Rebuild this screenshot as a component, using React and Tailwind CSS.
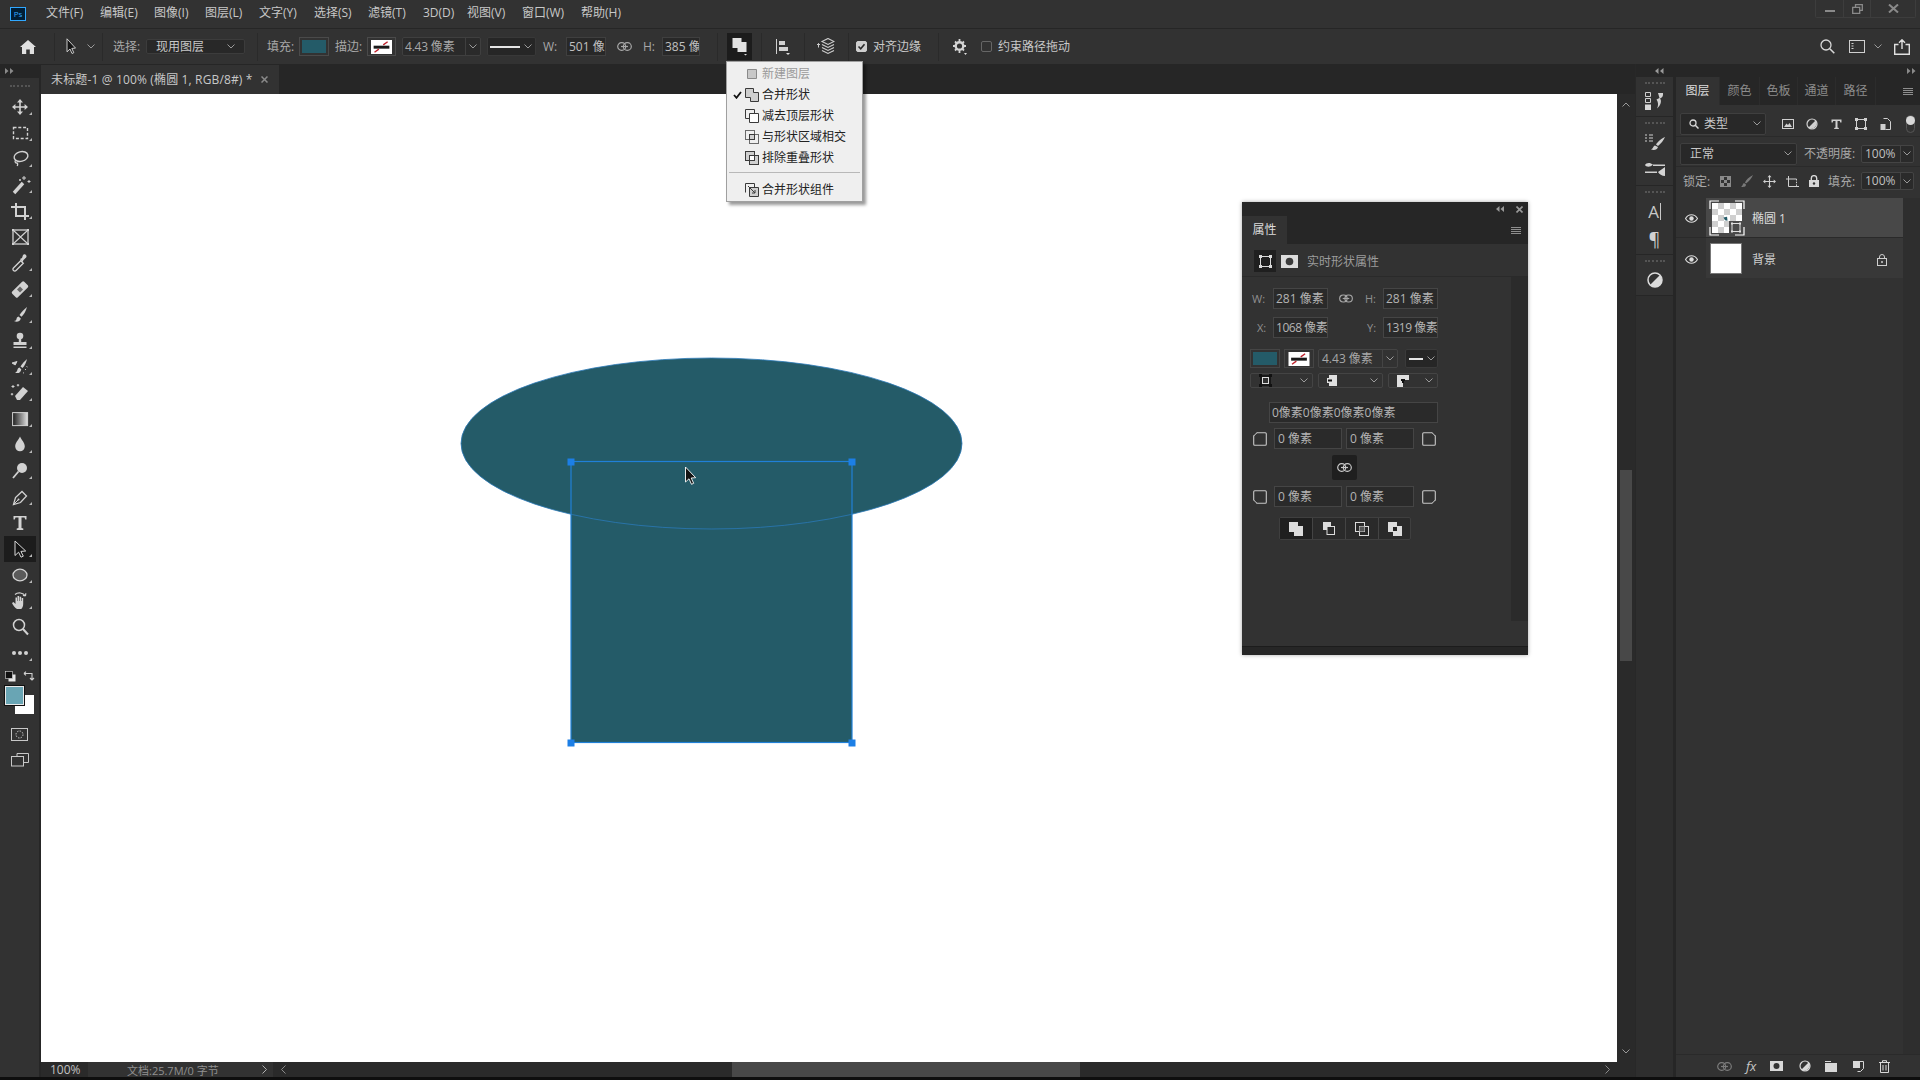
import React from 'react';

const C = '#d2d2d2';

// ---------- small shared bits ----------
const Chev = ({ className = '', dir = 'down' }) => (
  <svg width="8" height="5" viewBox="0 0 8 5" className={className} style={dir === 'down' ? undefined : { transform: 'rotate(180deg)' }}>
    <path d="M.5.5 4 4 7.5.5" fill="none" stroke="#9a9a9a" strokeWidth="1" />
  </svg>
);

const Sep = ({ className = '' }) => <div className={`w-px h-[28px] bg-[#2a2a2a] shrink-0 ${className}`} />;

const Grip = () => <div className="w-[20px] h-[3px] mx-auto border-t-2 border-dotted border-[#555555]" />;

const Tri = ({ x = 25, y = 18 }) => <path d={`M${x + 3} ${y}v3h-3z`} fill="#b8b8b8" />;

const LinkIcon = ({ color = '#a8a8a8' }) => (
  <svg width="15" height="9" viewBox="0 0 15 9">
    <rect x=".7" y=".7" width="8" height="7.6" rx="3.8" fill="none" stroke={color} strokeWidth="1.2" />
    <rect x="6.3" y=".7" width="8" height="7.6" rx="3.8" fill="none" stroke={color} strokeWidth="1.2" />
    <path d="M4 4.5h7" stroke={color} strokeWidth="1.2" />
  </svg>
);

const StrokeSwatch = ({ w, h }) => (
  <svg width={w} height={h} viewBox="0 0 24 16">
    <rect width="24" height="16" fill="#fff" />
    <rect x="3" y="6.5" width="18" height="3.4" fill="#1a1a1a" />
    <path d="M14 5.5 19 2M4 14l5-3.5" stroke="#c0222c" strokeWidth="1.6" />
  </svg>
);

const Checkbox = ({ checked }) => (
  <div className={`w-[11px] h-[11px] rounded-[2px] shrink-0 flex items-center justify-center border ${checked ? 'bg-[#cfcfcf] border-[#cfcfcf]' : 'border-[#666666]'}`}>
    {checked && (
      <svg width="9" height="9" viewBox="0 0 9 9"><path d="M1.5 4.5 3.7 6.7 7.5 2.2" fill="none" stroke="#2a2a2a" strokeWidth="1.6" /></svg>
    )}
  </div>
);

// ---------- tool icons, drawn on a 32x26 box ----------
const T = ({ children, tri = true, active }) => (
  <div className={`h-[26px] w-[32px] mx-auto shrink-0 ${active ? 'bg-[#1c1c1c]' : ''}`}>
    <svg width="32" height="26" viewBox="0 0 32 26">
      {children}
      {tri && <Tri />}
    </svg>
  </div>
);

const tools = [
  <T key="move">
    <path d="M16 6v14M9 13h14" stroke={C} strokeWidth="1.6" />
    <path d="M16 5l-3 3.4h6zM16 21l-3-3.4h6zM8 13l3.4-3v6zM24 13l-3.4-3v6z" fill={C} />
  </T>,
  <T key="marquee"><rect x="9.5" y="7.5" width="14" height="11" fill="none" stroke={C} strokeWidth="1.4" strokeDasharray="3 1.8" /></T>,
  <T key="lasso">
    <ellipse cx="17" cy="10.5" rx="7" ry="4.8" fill="none" stroke={C} strokeWidth="1.4" transform="rotate(-14 17 10.5)" />
    <path d="M12 14c-1.6 1-1 3 .6 3 1.2 0 1.4 1.4.6 3" fill="none" stroke={C} strokeWidth="1.3" />
  </T>,
  <T key="wand">
    <path d="M10 21 19 11" stroke={C} strokeWidth="3.4" />
    <path d="M20 4v4M18 6h4M25 8v3M23.5 9.5h3M16 7v2M15 8h2" stroke={C} strokeWidth="1" />
  </T>,
  <T key="crop"><path d="M12 5v13h13M7 9h14v13" fill="none" stroke={C} strokeWidth="2" /></T>,
  <T tri={false} key="frame">
    <rect x="9" y="6" width="15" height="14" fill="none" stroke={C} strokeWidth="1.3" />
    <path d="M9 6l15 14M24 6 9 20" stroke={C} strokeWidth="1.1" />
    <path d="M8 5h2v2H8zM23 5h2v2h-2zM8 19h2v2H8zM23 19h2v2h-2z" fill={C} />
  </T>,
  <T key="eyedrop">
    <path d="M9.5 20.5c-1-1-.6-2 .2-2.8l7-7 2.6 2.6-7 7c-.8.8-1.8 1.2-2.8.2z" fill="none" stroke={C} strokeWidth="1.3" />
    <path d="M16 9l2-1 1-3c1-1.4 3.5-.6 3.5 1.5 0 .8-.3 1.2-3 3.5l-1 2z" fill={C} />
  </T>,
  <T key="heal">
    <rect x="7.5" y="9.5" width="17" height="8" rx="1.5" fill={C} transform="rotate(-45 16 13.5)" />
    <path d="M16 10.5l3 3-3 3-3-3z" fill="#666" />
  </T>,
  <T key="brush">
    <path d="M23 5c-2.5 2-6 5.5-7.5 8l2 1.8c2.5-2.2 4.5-6 5.5-9.8z" fill={C} />
    <path d="M14.5 14.5c-1.5.3-1.8 1.5-2 2.5-.2 1-1 2-2.5 2 2.5 1.5 6 .8 6.8-2.5z" fill={C} />
  </T>,
  <T key="stamp">
    <circle cx="16" cy="8" r="3.3" fill={C} />
    <path d="M14.8 10h2.4v4h-2.4zM9.5 14h13v3h-13zM9.5 18.5h13V20h-13z" fill={C} />
  </T>,
  <T key="history">
    <path d="M23 5c-2.3 2-5 5-6.500 7.500l2 1.500c2.200-2.200 3.700-5.500 4.500-9z" fill={C} />
    <path d="M15.5 13.5c-1.800.6-2 2-2.300 3-.3 1-1 1.800-2.200 2 2.500 1.300 5.700.6 6.300-3z" fill={C} />
    <path d="M8 9l5-1.500-1.800 3.500zM21 15l1 1M22.5 12.5l1 .5M19 18.500l1 .8" stroke={C} fill={C} strokeWidth=".9" />
  </T>,
  <T key="eraser">
    <path d="M12 17l8-9 5 4-8 9h-3z" fill={C} transform="translate(-1 -1)" />
    <path d="M9 5v3M7.5 6.5h3M14 4v2.4M12.8 5.2h2.4M8 13v2.4M6.8 14.2h2.4" stroke={C} strokeWidth="1" />
  </T>,
  <T key="gradient">
    <defs>
      <linearGradient id="grad" x1="0" x2="1"><stop offset="0" stopColor="#1c1c1c" /><stop offset="1" stopColor="#e0e0e0" /></linearGradient>
    </defs>
    <rect x="8.6" y="6.6" width="15" height="13" fill="url(#grad)" stroke={C} strokeWidth="1" />
  </T>,
  <T key="blur"><path d="M16 4.500c1.500 3.500 4.800 6 4.800 10a4.800 4.800 0 0 1-9.600 0c0-4 3.300-6.500 4.800-10z" fill={C} /></T>,
  <T key="dodge">
    <circle cx="18" cy="10" r="5" fill={C} />
    <path d="M14.500 13.500 9 20" stroke={C} strokeWidth="1.8" />
  </T>,
  <T key="pen">
    <path d="M9.500 20.500l2-7 6.500-6 4.500 4.500-6 6.500z" fill="none" stroke={C} strokeWidth="1.3" />
    <path d="M9.500 20.500 14 16" stroke={C} strokeWidth="1" />
    <circle cx="14.5" cy="15.5" r="1" fill={C} />
  </T>,
  <T tri={false} key="type">
    <path d="M9.500 6h13v3.500h-1.300L20.500 7.500h-3V18l1.800.6V20h-6.600v-1.400l1.800-.6V7.500h-3l-.7 2H9.500z" fill={C} />
  </T>,
  <T key="select" active>
    <path d="M11 5v14.500l3.600-3.300 2.400 5 2.300-1-2.400-4.800 4.800-.4z" fill="#141414" stroke="#d8d8d8" strokeWidth="1" />
  </T>,
  <T key="ellipse"><ellipse cx="16" cy="13" rx="7" ry="5.8" fill="#5a5a5a" stroke={C} strokeWidth="1.3" /></T>,
  <T key="hand">
    <path d="M13 21c-2-1-4-3.500-5-6l1.500-1 2 2V9.500h1.500V13h.5V8h1.600v5h.5V8.800h1.600V13h.5v-3h1.500v6c0 2.500-1 4-2 5z" fill={C} />
    <path d="M11 6.500c3-2.500 8-2 10.500 1.500M21.500 8l.3-2.800M21.500 8l-2.600-.5" fill="none" stroke={C} strokeWidth="1.2" />
  </T>,
  <T tri={false} key="zoom">
    <circle cx="15" cy="11" r="5.5" fill="none" stroke={C} strokeWidth="1.5" />
    <path d="M19 15l5 5.500" stroke={C} strokeWidth="2" />
  </T>,
  <T key="more">
    <circle cx="10" cy="13" r="2" fill={C} /><circle cx="16" cy="13" r="2" fill={C} /><circle cx="22" cy="13" r="2" fill={C} />
  </T>,
];

// ---------- options bar ----------
const Label = ({ className = '', children }) => (
  <span className={`text-[12px] leading-none pt-px text-[#a8a8a8] whitespace-nowrap shrink-0 ${className}`}>{children}</span>
);

function TitleBar() {
  const menus = [
    ['文件(F)', 'ml-[20px] w-[54px]'], ['编辑(E)', 'w-[54px]'], ['图像(I)', 'w-[51px]'], ['图层(L)', 'w-[54px]'],
    ['文字(Y)', 'w-[55px]'], ['选择(S)', 'w-[54px]'], ['滤镜(T)', 'w-[55px]'], ['3D(D)', 'w-[44px]'],
    ['视图(V)', 'w-[55px]'], ['窗口(W)', 'w-[59px]'], ['帮助(H)', 'w-[60px]'],
  ];
  return (
    <div className="h-[29px] flex items-center bg-[#323232] border-b border-[#262626] shrink-0">
      <div className="ml-[10px] w-[16px] h-[14px] border border-[#31a8ff] bg-[#001e36] flex items-center justify-center text-[8px] leading-none text-[#31a8ff]">Ps</div>
      {menus.map(([m, cls]) => (
        <span key={m} className={`text-[12px] pb-[2px] text-[#c8c8c8] whitespace-nowrap ${cls}`}>{m}</span>
      ))}
      <div className="ml-auto mr-[4px] w-[101px] h-[18px] self-start flex items-center border-x border-b border-[#3d3d3d] rounded-b-[2px]">
        <div className="w-[28px] h-full flex items-center justify-center border-r border-[#3d3d3d]">
          <div className="w-[10px] h-[2px] bg-[#8a8a8a] mt-[5px]" />
        </div>
        <div className="w-[27px] h-full flex items-center justify-center border-r border-[#3d3d3d]">
          <svg width="11" height="10" viewBox="0 0 11 10"><path d="M3.5 3V.7h6.800v5.600H8M.7 3.300h7v6H.7z" fill="none" stroke="#8a8a8a" strokeWidth="1.3" /></svg>
        </div>
        <div className="flex-1 flex items-center justify-center">
          <svg width="11" height="9" viewBox="0 0 11 9"><path d="M1 .5 10 8.500M10 .5 1 8.500" stroke="#8a8a8a" strokeWidth="2" /></svg>
        </div>
      </div>
    </div>
  );
}

function OptionsBar() {
  return (
    <div className="h-[35px] flex items-center bg-[#323232] shrink-0 relative z-10">
      <svg width="16" height="14" viewBox="0 0 16 14" className="ml-[20px] shrink-0"><path d="M8 0 16 7h-2v7H9.800V9.500H6.200V14H2V7H0z" fill="#e0e0e0" /></svg>
      <Sep className="ml-[18px]" />
      <svg width="10" height="17" viewBox="0 0 10 17" className="ml-[11px] shrink-0"><path d="M1 .8v13l3-2.800 2 4.500 1.800-.8-2-4.300 3.700-.3z" fill="#141414" stroke="#dcdcdc" strokeWidth=".9" /></svg>
      <Chev className="ml-[11px] shrink-0" />
      <Sep className="ml-[7px]" />
      <Label className="ml-[10px] w-[33px]">选择:</Label>
      <div className="w-[99px] h-[15px] flex items-center justify-between px-[9px] bg-[#282828] rounded-[2px] border border-[#3c3c3c] shrink-0">
        <span className="text-[12px] leading-none text-[#c8c8c8]">现用图层</span>
        <Chev />
      </div>
      <Sep className="ml-[12px]" />
      <Label className="ml-[9px] w-[32px]">填充:</Label>
      <div className="w-[30px] h-[19px] p-[2px] border border-[#4a4a4a] shrink-0"><div className="w-full h-full bg-[#245b68]" /></div>
      <Label className="ml-[6px] w-[32px]">描边:</Label>
      <div className="w-[29px] h-[19px] p-[2px] border border-[#4a4a4a] flex items-center justify-center shrink-0"><StrokeSwatch w={23} h={14} /></div>
      <div className="ml-[6px] w-[79px] h-[19px] flex items-center bg-[#2a2a2a] border border-[#3f3f3f] rounded-[2px] shrink-0">
        <span className="flex-1 pl-[2px] text-[12px] leading-none tracking-[-0.2px] text-[#a8a8a8] whitespace-nowrap">4.43 像素</span>
        <div className="w-[15px] h-full flex items-center justify-center border-l border-[#3f3f3f]"><Chev /></div>
      </div>
      <div className="ml-[6px] w-[49px] h-[19px] flex items-center gap-[4px] pl-[2px] bg-[#262626] rounded-[2px] border border-[#383838] shrink-0">
        <div className="w-[30px] h-[2px] bg-[#e4e4e4]" />
        <Chev />
      </div>
      <Label className="ml-[7px] w-[23px]">W:</Label>
      <div className="w-[40px] h-[19px] flex items-center pl-[2px] bg-[#282828] border border-[#3f3f3f] overflow-hidden shrink-0">
        <span className="text-[12px] leading-none text-[#c0c0c0] whitespace-nowrap">501 像</span>
      </div>
      <div className="ml-[11px] w-[15px] flex shrink-0"><LinkIcon /></div>
      <Label className="ml-[11px] w-[19px]">H:</Label>
      <div className="w-[38px] h-[19px] flex items-center pl-[2px] bg-[#282828] border border-[#3f3f3f] overflow-hidden shrink-0">
        <span className="text-[12px] leading-none text-[#c0c0c0] whitespace-nowrap">385 像</span>
      </div>
      <Sep className="ml-[17px]" />
      <div className="ml-[9px] w-[25px] h-[27px] bg-[#1c1c1c] flex items-center justify-center shrink-0">
        <svg width="17" height="19" viewBox="0 0 17 19">
          <path d="M1.500 1h9v4h5v10h-9v-4h-5z" fill="#e2e2e2" />
          <path d="M13 17h3l-1.500 1.500z" fill="#ddd" />
        </svg>
      </div>
      <Sep className="ml-[9px]" />
      <svg width="15" height="16" viewBox="0 0 15 16" className="ml-[14px] shrink-0">
        <path d="M.5 0v15" stroke="#d0d0d0" />
        <path d="M3 2h6v4H3zM3 8h9v4H3z" fill="#d0d0d0" />
        <path d="M10 14h4l-2 2z" fill="#ddd" />
      </svg>
      <Sep className="ml-[13px]" />
      <svg width="18" height="17" viewBox="0 0 18 17" className="ml-[12px] shrink-0">
        <path d="M1.500 9.500V5.500M0 7l1.500-1.500L3 7" stroke="#ccc" fill="none" />
        <path d="M11 .5l6 3-6 3-6-3zM5 6.500l6 3 6-3M5 9.500l6 3 6-3M5 12.500l6 3 6-3" fill="none" stroke="#d0d0d0" strokeWidth="1.1" />
      </svg>
      <Sep className="ml-[13px]" />
      <div className="ml-[7px] shrink-0"><Checkbox checked /></div>
      <span className="ml-[6px] w-[65px] text-[12px] leading-none pt-px text-[#c8c8c8] whitespace-nowrap shrink-0">对齐边缘</span>
      <Sep />
      <svg width="14" height="16" viewBox="0 0 14 16" className="ml-[14px] shrink-0">
        <circle cx="6.500" cy="7" r="3.800" fill="none" stroke="#d4d4d4" strokeWidth="2.400" />
        <path d="M6.500 0v2.500M6.500 11.500V14M0 7h2.500M10.500 7H13M2 2.500l1.700 1.700M9.300 9.800 11 11.500M11 2.500 9.300 4.200M3.700 9.800 2 11.500" stroke="#d4d4d4" strokeWidth="1.8" />
        <path d="M11 14h3l-1.500 2z" fill="#ddd" />
      </svg>
      <div className="ml-[14px] shrink-0"><Checkbox /></div>
      <span className="ml-[6px] text-[12px] leading-none pt-px text-[#c8c8c8] whitespace-nowrap">约束路径拖动</span>

      <div className="ml-auto mr-[10px] flex items-center shrink-0">
        <svg width="15" height="15" viewBox="0 0 15 15"><circle cx="6" cy="6" r="5" fill="none" stroke="#d8d8d8" strokeWidth="1.3" /><path d="M9.800 9.800 14.300 14.300" stroke="#d8d8d8" strokeWidth="1.6" /></svg>
        <svg width="16" height="13" viewBox="0 0 16 13" className="ml-[14px]"><rect x=".5" y=".5" width="15" height="12" fill="none" stroke="#d0d0d0" /><path d="M2.500 3h2v1h-2zM2.500 5.500h2v1h-2zM2.500 8h2v1h-2z" fill="#d0d0d0" /></svg>
        <Chev className="ml-[9px]" />
        <svg width="16" height="16" viewBox="0 0 16 16" className="ml-[12px]"><path d="M4.500 5.500H.7v9.800h14.600V5.500h-3.800M8 1v9M5 3.700 8 .8l3 2.900" fill="none" stroke="#e0e0e0" strokeWidth="1.4" /></svg>
      </div>
    </div>
  );
}

// ---------- left tool column ----------
function LeftTools() {
  return (
    <div className="w-[41px] shrink-0 flex flex-col bg-[#323232] border-r-2 border-[#262626]">
      <div className="h-[14px] bg-[#262626] flex items-center pl-[5px]">
        <svg width="9" height="6" viewBox="0 0 9 6"><path d="M0 0l3.500 3L0 6zM5 0l3.500 3L5 6z" fill="#8a8a8a" /></svg>
      </div>
      <div className="h-[16px] flex items-center"><Grip /></div>
      {tools}
      <div className="h-[3px] shrink-0" />
      <div className="h-[14px] flex items-center pl-[5px] gap-[7px] shrink-0">
        <svg width="11" height="11" viewBox="0 0 11 11"><rect x="3.500" y="3.500" width="7" height="7" fill="#e8e8e8" /><rect x=".5" y=".5" width="7" height="7" fill="#111" stroke="#ddd" strokeWidth=".6" /></svg>
        <svg width="12" height="11" viewBox="0 0 12 11"><path d="M1 2.500h8V9M1 2.500 3 .7M1 2.500l2 1.800M9 9 7 7M9 9l2-2" fill="none" stroke="#cfcfcf" strokeWidth="1.1" /></svg>
      </div>
      <div className="h-[38px] pl-[5px] pt-[3px] shrink-0">
        <div className="w-[29px] h-[29px] flex flex-col">
          <div className="w-[19px] h-[19px] bg-[#69a5b4] border border-[#e8e8e8] outline outline-1 outline-[#111] relative z-10" />
          <div className="w-[19px] h-[19px] bg-white ml-[10px] -mt-[10px]" />
        </div>
      </div>
      <div className="h-[26px] flex items-center justify-center shrink-0">
        <svg width="17" height="13" viewBox="0 0 17 13"><rect x=".5" y=".5" width="16" height="12" fill="none" stroke="#c8c8c8" /><circle cx="8.500" cy="6.500" r="3.500" fill="none" stroke="#c8c8c8" strokeDasharray="1.500 1.200" /></svg>
      </div>
      <div className="h-[26px] flex items-center justify-center shrink-0">
        <svg width="18" height="14" viewBox="0 0 18 14"><path d="M6 3.500V.5h11.500v9H13" fill="none" stroke="#c8c8c8" /><rect x=".5" y="3.500" width="12" height="9.500" fill="#323232" stroke="#c8c8c8" /></svg>
      </div>
    </div>
  );
}

// ---------- canvas ----------
function Canvas() {
  const handles = [[571, 462], [852, 462], [571, 743], [852, 743]];
  return (
    <div className="flex-1 bg-white relative overflow-hidden">
      <svg className="absolute inset-0" width="1576" height="968" viewBox="41 94 1576 968">
        <ellipse cx="711.5" cy="443.5" rx="250.5" ry="85.5" fill="#245b68" />
        <rect x="571" y="462" width="281" height="281" fill="#245b68" />
        <ellipse cx="711.5" cy="443.5" rx="250.5" ry="85.5" fill="none" stroke="#2a78b8" strokeWidth=".8" />
        <rect x="571" y="461.5" width="281" height="281" fill="none" stroke="#2080d8" strokeWidth="1.2" />
        {handles.map(([x, y]) => <rect key={x + '-' + y} x={x - 3.5} y={y - 3.5} width="7" height="7" fill="#1c7fe6" />)}
        <path d="M685.5 467v15l3.500-3.200 2.500 5.500 2.200-1-2.500-5.300 4.500-.3z" fill="#141414" stroke="#fff" strokeWidth=".9" />
      </svg>
    </div>
  );
}

// ---------- center column ----------
function Center() {
  return (
    <div className="w-[1594px] shrink-0 flex flex-col">
      <div className="h-[30px] bg-[#262626] flex items-end shrink-0">
        <div className="w-[238px] h-[29px] bg-[#323232] flex items-center pl-[10px]">
          <span className="text-[12px] leading-none tracking-[0.15px] text-[#c8c8c8] whitespace-nowrap">未标题-1 @ 100% (椭圆 1, RGB/8#) *</span>
          <svg width="7" height="7" viewBox="0 0 7 7" className="ml-auto mr-[11px]"><path d="M.5.5l6 6M6.500.5l-6 6" stroke="#8a8a8a" strokeWidth="1.5" /></svg>
        </div>
      </div>
      <div className="h-[968px] flex shrink-0">
        <Canvas />
        <div className="w-[18px] bg-[#2a2a2a] flex flex-col items-center py-[8px]">
          <Chev dir="up" />
          <div className="mt-[363px] w-[12px] h-[191px] bg-[#484848]" />
          <Chev className="mt-auto" />
        </div>
      </div>
      <div className="h-[15px] flex items-center bg-[#2a2a2a] shrink-0">
        <span className="w-[47px] pl-[9px] pt-px text-[12px] leading-none text-[#c0c0c0]">100%</span>
        <div className="w-[185px] h-full flex items-center bg-[#323232] pl-[39px]">
          <span className="text-[11px] pt-px leading-none text-[#909090] whitespace-nowrap">文档:25.7M/0 字节</span>
          <svg width="5" height="9" viewBox="0 0 5 9" className="ml-auto mr-[6px]"><path d="M.5.5l4 4-4 4" fill="none" stroke="#b0b0b0" /></svg>
        </div>
        <svg width="5" height="9" viewBox="0 0 5 9" className="ml-[8px]"><path d="M4.500.5l-4 4 4 4" fill="none" stroke="#8a8a8a" /></svg>
        <div className="ml-[446px] w-[348px] h-full bg-[#484848]" />
        <svg width="5" height="9" viewBox="0 0 5 9" className="ml-[525px]"><path d="M.5.5l4 4-4 4" fill="none" stroke="#8a8a8a" /></svg>
      </div>
    </div>
  );
}

// ---------- right dock ----------
const DockGroup = ({ h, children }) => (
  <div className={`flex flex-col items-center border-b border-[#262626] pt-[5px] ${h}`}>
    <Grip />
    {children}
  </div>
);

function Dock() {
  return (
    <div className="w-[38px] shrink-0 flex flex-col bg-[#2e2e2e] border-l border-[#282828]">
      <div className="h-[13px] bg-[#262626] flex items-center justify-end pr-[9px]">
        <svg width="9" height="6" viewBox="0 0 9 6"><path d="M3.500 0 0 3l3.500 3zM8.500 0 5 3l3.500 3z" fill="#9a9a9a" /></svg>
      </div>
      <DockGroup h="h-[40px] bg-[#323232]">
        <svg width="20" height="18" viewBox="0 0 20 18" className="mt-[7px]">
          <path d="M.5.5h5v4h-5zM.5 6.500h5v4h-5z" fill="none" stroke="#d0d0d0" />
          <path d="M0 12.500h6V18H0z" fill="#d8d8d8" />
          <path d="M13 1h5c.5 3-1 5-3 5.500 2 2 .8 7-3 10 1.500-3 1.500-6-.5-9l3-1.500z" fill="#d0d0d0" />
        </svg>
      </DockGroup>
      <DockGroup h="h-[69px] bg-[#323232]">
        <svg width="22" height="18" viewBox="0 0 22 18" className="mt-[8px]">
          <path d="M1 2h2M1 5h2M1 8h2M5 2h4M5 5h4M5 8h4" stroke="#d0d0d0" />
          <path d="M21 4c-3 1-7 4.500-9 7.500l2 1.500c3-2.500 5.500-5.500 7-9zM11 12.500c-2 .6-1.500 3-4 4 3 1 6.300.5 7-2.500z" fill="#d0d0d0" />
        </svg>
        <svg width="20" height="15" viewBox="0 0 20 15" className="mt-[11px]">
          <path d="M8 2.500h12V4H8zM0 9.500h12V11H0z" fill="#d0d0d0" />
          <path d="M0 3c1-2 5-3 8-.2C5 5.500 1 5 0 3zM20 5v9c-3 0-6-2-7-4z" fill="#d4d4d4" />
        </svg>
      </DockGroup>
      <DockGroup h="h-[69px] bg-[#323232]">
        <div className="mt-[8px] h-[19px] flex items-center text-[17px] leading-none text-[#c8c8c8]">A<span className="w-px h-[17px] bg-[#c8c8c8] ml-[1px]" /></div>
        <span className="mt-[9px] text-[18px] leading-none text-[#d0d0d0]">¶</span>
      </DockGroup>
      <DockGroup h="h-[41px] bg-[#323232]">
        <svg width="16" height="16" viewBox="0 0 16 16" className="mt-[9px]">
          <circle cx="8" cy="8" r="7" fill="none" stroke="#dcdcdc" strokeWidth="1.5" />
          <path d="M13 3A7 7 0 0 1 3 13z" fill="#dcdcdc" />
        </svg>
      </DockGroup>
    </div>
  );
}

// ---------- layers panel ----------
const Eye = () => (
  <svg width="13" height="9" viewBox="0 0 13 9" className="shrink-0">
    <path d="M.5 4.500C2 2 4 .8 6.500.8S11 2 12.500 4.500C11 7 9 8.200 6.500 8.200S2 7 .5 4.500z" fill="none" stroke="#dcdcdc" strokeWidth="1.1" />
    <circle cx="6.500" cy="4.500" r="2.200" fill="#dcdcdc" />
  </svg>
);

const PercentBox = () => (
  <div className="ml-auto mr-[6px] w-[53px] h-[18px] flex items-center border border-[#444444] rounded-[2px] bg-[#2a2a2a] shrink-0">
    <span className="w-[38px] pl-[3px] text-[12px] leading-none text-[#c0c0c0]">100%</span>
    <div className="flex-1 h-full flex items-center justify-center border-l border-[#444444]"><Chev /></div>
  </div>
);

const Tab = ({ children, w, active }) => (
  <div className={`h-full flex items-center justify-center text-[12px] leading-none border-r border-[#2c2c2c] shrink-0 ${w} ${active ? 'bg-[#323232] text-[#dcdcdc]' : 'text-[#8c8c8c]'}`}>{children}</div>
);

const Burger = ({ className = '' }) => (
  <svg width="10" height="7" viewBox="0 0 10 7" className={className}><path d="M0 .5h10M0 2.500h10M0 4.500h10M0 6.500h10" stroke="#9a9a9a" strokeWidth=".9" /></svg>
);

function LayersPanel() {
  return (
    <div className="w-[244px] shrink-0 ml-[3px] flex flex-col bg-[#323232]">
      <div className="h-[13px] bg-[#262626] flex items-center justify-end pr-[4px] shrink-0">
        <svg width="9" height="6" viewBox="0 0 9 6"><path d="M0 0l3.500 3L0 6zM5 0l3.500 3L5 6z" fill="#8a8a8a" /></svg>
      </div>
      <div className="h-[28px] flex items-center bg-[#262626] shrink-0">
        <Tab w="w-[44px]" active>图层</Tab>
        <Tab w="w-[40px]">颜色</Tab>
        <Tab w="w-[38px]">色板</Tab>
        <Tab w="w-[38px]">通道</Tab>
        <Tab w="w-[40px]">路径</Tab>
        <Burger className="ml-auto mr-[7px]" />
      </div>
      <div className="h-[32px] flex items-center border-b border-[#2a2a2a] shrink-0 pt-[6px]">
        <div className="ml-[4px] w-[86px] h-[22px] flex items-center pl-[8px] bg-[#282828] border border-[#3f3f3f] rounded-[2px]">
          <svg width="10" height="10" viewBox="0 0 10 10"><circle cx="4" cy="4" r="3" fill="none" stroke="#d8d8d8" strokeWidth="1.3" /><path d="M6.300 6.300 9.500 9.500" stroke="#d8d8d8" strokeWidth="1.5" /></svg>
          <span className="ml-[5px] text-[12px] leading-none text-[#c8c8c8]">类型</span>
          <Chev className="ml-auto mr-[4px]" />
        </div>
        <svg width="12" height="10" viewBox="0 0 12 10" className="ml-[16px]"><rect x=".5" y=".5" width="11" height="9" fill="none" stroke="#d0d0d0" /><path d="M2 8l2.500-3.500L6 6l1.500-2L10 8z" fill="#d0d0d0" /></svg>
        <svg width="12" height="12" viewBox="0 0 12 12" className="ml-[12px]"><circle cx="6" cy="6" r="5" fill="none" stroke="#d0d0d0" strokeWidth="1.2" /><path d="M9.500 2.500a5 5 0 0 1-7 7z" fill="#d0d0d0" /></svg>
        <svg width="11" height="10" viewBox="0 0 11 10" className="ml-[13px]"><path d="M.5.5h10v3H9.300L8.800 2H6.500v6.500l1.300.5v1H3.200V9l1.300-.5V2H2.200l-.5 1.500H.5z" fill="#d0d0d0" /></svg>
        <svg width="12" height="12" viewBox="0 0 12 12" className="ml-[13px]"><rect x="1.500" y="1.500" width="9" height="9" fill="none" stroke="#d0d0d0" /><path d="M0 0h3v3H0zM9 0h3v3H9zM0 9h3v3H0zM9 9h3v3H9z" fill="#d0d0d0" /></svg>
        <svg width="11" height="12" viewBox="0 0 11 12" className="ml-[13px]"><path d="M3.500.5h4l3 3v8h-5" fill="none" stroke="#d0d0d0" /><path d="M.5 6h5v6h-5z" fill="#d0d0d0" /></svg>
        <div className="ml-[15px] w-[9px] h-[18px] rounded-full border border-[#555555] flex flex-col items-center">
          <div className="w-[9px] h-[9px] rounded-full bg-[#d8d8d8] shrink-0" />
        </div>
      </div>
      <div className="h-[30px] flex items-center border-b border-[#2a2a2a] shrink-0 pt-[4px]">
        <div className="ml-[4px] w-[117px] h-[22px] flex items-center pl-[9px] bg-[#282828] border border-[#3f3f3f] rounded-[2px]">
          <span className="text-[12px] leading-none text-[#c8c8c8]">正常</span>
          <Chev className="ml-auto mr-[4px]" />
        </div>
        <Label className="ml-[7px]">不透明度:</Label>
        <PercentBox />
      </div>
      <div className="h-[31px] flex items-center shrink-0 pb-[3px]">
        <Label className="ml-[7px] w-[37px]">锁定:</Label>
        <svg width="11" height="11" viewBox="0 0 11 11"><rect x=".5" y=".5" width="10" height="10" fill="none" stroke="#8a8a8a" /><path d="M1 1h3v3H1zM7 1h3v3H7zM4 4h3v3H4zM1 7h3v3H1zM7 7h3v3H7z" fill="#8a8a8a" /></svg>
        <svg width="12" height="12" viewBox="0 0 12 12" className="ml-[10px]"><path d="M12 0C8 2 5 5 4 7.500l1 1c3-2 5.500-5 7-8.500zM3 8c-1.500.5-1 3-3 4 2.500 0 5 0 5-2.500z" fill="#7a7a7a" /></svg>
        <svg width="13" height="13" viewBox="0 0 13 13" className="ml-[10px]"><path d="M6.500 1v11M1 6.500h11" stroke="#d0d0d0" strokeWidth="1.1" /><path d="M6.500 0 4.500 2.300h4zM6.500 13l-2-2.300h4zM0 6.500l2.300-2v4zM13 6.500l-2.300-2v4z" fill="#d0d0d0" /></svg>
        <svg width="13" height="13" viewBox="0 0 13 13" className="ml-[10px]"><path d="M0 3h10.500M2.500 0v10.500H13" fill="none" stroke="#d0d0d0" transform="translate(0 1)" /><path d="M10.500 4v7" stroke="#d0d0d0" strokeDasharray="1.500 1.200" /></svg>
        <svg width="10" height="12" viewBox="0 0 10 12" className="ml-[10px]"><path d="M0 5h10v7H0z" fill="#d8d8d8" /><path d="M2.300 5V3.300a2.700 2.700 0 0 1 5.400 0V5" fill="none" stroke="#d8d8d8" strokeWidth="1.4" /><circle cx="5" cy="8.500" r="1.200" fill="#323232" /></svg>
        <Label className="ml-[9px]">填充:</Label>
        <PercentBox />
      </div>

      <div className="flex-1 flex min-h-0">
        <div className="w-[227px] flex flex-col">
          {/* selected layer */}
          <div className="h-[40px] flex items-center border-b border-[#2a2a2a] shrink-0">
            <div className="w-[30px] h-full pt-[2px] flex items-center justify-center"><Eye /></div>
            <div className="flex-1 h-full flex items-center bg-[#484848]">
              <div className="ml-[3px] w-[36px] h-[36px] p-[3px] relative">
                <div className="w-[30px] h-[30px] bg-[conic-gradient(#cfcfcf_25%,#ffffff_0_50%,#cfcfcf_0_75%,#ffffff_0)] bg-[length:12px_12px]" />
                <svg width="36" height="36" viewBox="0 0 36 36" className="absolute inset-0">
                  <path d="M1 9V1h9M26 1h9v8M1 27v8h9M26 35h9v-8" fill="none" stroke="#fff" strokeWidth="1.2" />
                  <path d="M14.500 17.500l3.500-.8.5 4-2.500-.5z" fill="#245b68" />
                  <rect x="20" y="21" width="14" height="13" fill="#4a4a4a" />
                  <rect x="23" y="23.500" width="8" height="8" fill="none" stroke="#e0e0e0" />
                  <path d="M22 22.500h2v2h-2zM30 22.500h2v2h-2zM22 30.500h2v2h-2zM30 30.500h2v2h-2z" fill="#e0e0e0" />
                </svg>
              </div>
              <span className="ml-[7px] pt-[2px] text-[12px] leading-none text-[#dcdcdc] whitespace-nowrap">椭圆 1</span>
            </div>
          </div>
          {/* background layer */}
          <div className="h-[40px] flex items-center shrink-0">
            <div className="w-[30px] h-full pt-[3px] flex items-center justify-center"><Eye /></div>
            <div className="flex-1 h-full flex items-center bg-[#383838]">
              <div className="ml-[4px] mt-[1px] w-[32px] h-[31px] bg-white border border-[#777777]" />
              <span className="ml-[10px] pt-[3px] text-[12px] leading-none text-[#cfcfcf]">背景</span>
              <svg width="10" height="12" viewBox="0 0 10 12" className="ml-auto mr-[16px] mt-[3px]"><rect x=".5" y="4.500" width="9" height="7" fill="none" stroke="#cfcfcf" /><path d="M2.500 4.500V3a2.500 2.500 0 0 1 5 0v1.500" fill="none" stroke="#cfcfcf" /><circle cx="5" cy="8" r="1" fill="#cfcfcf" /></svg>
            </div>
          </div>
        </div>
        <div className="flex-1 bg-[#2e2e2e]" />
      </div>

      {/* bottom actions */}
      <div className="h-[23px] flex items-center bg-[#323232] border-t border-[#2a2a2a] shrink-0">
        <div className="ml-[41px] flex"><LinkIcon color="#7c7c7c" /></div>
        <span className="ml-[14px] text-[13px] leading-none italic text-[#c8c8c8]">fx</span>
        <svg width="13" height="10" viewBox="0 0 13 10" className="ml-[14px]"><rect width="13" height="10" fill="#d8d8d8" /><circle cx="6.500" cy="5" r="3" fill="#323232" /></svg>
        <svg width="12" height="12" viewBox="0 0 12 12" className="ml-[16px]"><circle cx="6" cy="6" r="5" fill="none" stroke="#d8d8d8" strokeWidth="1.2" /><path d="M9.500 2.500a5 5 0 0 1-7 7z" fill="#d8d8d8" /></svg>
        <svg width="12" height="11" viewBox="0 0 12 11" className="ml-[14px]"><path d="M0 0h6v1H0zM0 2h12v9H0z" fill="#d8d8d8" /></svg>
        <svg width="11" height="11" viewBox="0 0 11 11" className="ml-[16px]"><path d="M.5.500h10v7l-3 3h-3" fill="none" stroke="#d8d8d8" /><path d="M0 0h7v7H0z" fill="#d8d8d8" /></svg>
        <svg width="11" height="13" viewBox="0 0 11 13" className="ml-[15px]"><path d="M0 2.500h11M3.500 2.500V.7h4v1.800M1.500 2.500v10h8v-10M4 5v5.500M7 5v5.500" fill="none" stroke="#d8d8d8" /></svg>
      </div>
    </div>
  );
}

// ---------- shape operations menu ----------
const opIcons = {
  new: <path d="M2.500 2.500h9v9h-9z" fill="#c8c8c8" stroke="#8a8a8a" />,
  add: <path d="M.5.500h8v4h5v9h-8v-4h-5z" fill="#cfcfcf" stroke="#3a3a3a" />,
  sub: <g fill="none" stroke="#3a3a3a"><path d="M.5 9.500v-9h9v4" /><path d="M4.500 4.500h9v9h-9z" fill="#fff" /><path d="M.5 9.500h4" /></g>,
  int: <g fill="none" stroke="#6a6a6a"><rect x=".5" y=".5" width="9" height="9" /><rect x="4.500" y="4.500" width="9" height="9" /><rect x="4.500" y="4.500" width="5" height="5" fill="#cfcfcf" stroke="#3a3a3a" /></g>,
  exc: <g stroke="#3a3a3a"><rect x=".5" y=".5" width="9" height="9" fill="#cfcfcf" /><rect x="4.500" y="4.500" width="9" height="9" fill="#cfcfcf" /><rect x="4.500" y="4.500" width="5" height="5" fill="#fff" /></g>,
  merge: <g stroke="#3a3a3a" fill="none"><path d="M.5 9.500v-9h9v4" /><path d="M4.500 4.500h9v9h-9z" fill="#cfcfcf" /><path d="M3 3l7 7M10 7v3H7" /></g>,
};

const OpItem = ({ icon, label, checked, disabled }) => (
  <div className={`h-[21px] flex items-center shrink-0 text-[12px] leading-none ${disabled ? 'text-[#9a9a9a]' : 'text-[#222222]'}`}>
    <div className="w-[18px] pl-[6px] shrink-0">
      {checked && <svg width="9" height="8" viewBox="0 0 9 8"><path d="M1 4l2.500 2.800L8 1" fill="none" stroke="#111" strokeWidth="1.8" /></svg>}
    </div>
    <svg width="14" height="14" viewBox="0 0 14 14" className="shrink-0">{opIcons[icon]}</svg>
    <span className="ml-[3px] whitespace-nowrap">{label}</span>
  </div>
);

function ShapeMenu() {
  return (
    <div className="absolute left-[726px] top-[61px] w-[137px] h-[141px] flex flex-col pt-[1px] bg-[#efefef] border border-[#a0a0a0] shadow-[3px_3px_3px_rgba(0,0,0,0.4)] z-20">
      <OpItem icon="new" label="新建图层" disabled />
      <OpItem icon="add" label="合并形状" checked />
      <OpItem icon="sub" label="减去顶层形状" />
      <OpItem icon="int" label="与形状区域相交" />
      <OpItem icon="exc" label="排除重叠形状" />
      <div className="h-px bg-[#b8b8b8] mx-[2px] mt-[4px] mb-[6px] shrink-0" />
      <OpItem icon="merge" label="合并形状组件" />
    </div>
  );
}

// ---------- floating properties panel ----------
const Num = ({ w = 'w-[55px]', h = 'h-[21px]', className = '', tight, children }) => (
  <div className={`flex items-center pl-[2px] bg-[#2a2a2a] border border-[#454545] shrink-0 overflow-hidden ${w} ${h} ${className}`}>
    <span className={`text-[12px] leading-none text-[#b4b4b4] whitespace-nowrap ${tight ? 'tracking-[-0.45px]' : ''}`}>{children}</span>
  </div>
);

const Corner = ({ tl, tr, bl, br }) => (
  <svg width="14" height="14" viewBox="0 0 14 14" className="shrink-0">
    <rect x=".7" y=".7" width="12.6" height="12.6" rx="1" fill="none" stroke="#c8c8c8" strokeWidth="1.1" />
    {tl && <path d="M0 0h4L0 4z" fill="#323232" />}
    {tr && <path d="M14 0h-4l4 4z" fill="#323232" />}
    {bl && <path d="M0 14h4l-4-4z" fill="#323232" />}
    {br && <path d="M14 14h-4l4-4z" fill="#323232" />}
    {tl && <path d="M.7 4 4 .7" stroke="#c8c8c8" />}
    {tr && <path d="M10 .7 13.300 4" stroke="#c8c8c8" />}
    {bl && <path d="M.7 10 4 13.300" stroke="#c8c8c8" />}
    {br && <path d="M13.300 10 10 13.300" stroke="#c8c8c8" />}
  </svg>
);

const Drop = ({ w, children }) => (
  <div className={`h-[15px] flex items-center justify-between pl-[8px] pr-[4px] border border-[#444444] rounded-[2px] shrink-0 ${w}`}>
    {children}
    <Chev />
  </div>
);

function PropertiesPanel() {
  return (
    <div className="absolute left-[1242px] top-[202px] w-[286px] h-[453px] flex flex-col bg-[#323232] shadow-[0_0_4px_rgba(0,0,0,0.35)] z-10">
      <div className="h-[14px] bg-[#262626] flex items-center justify-end shrink-0">
        <svg width="8" height="6" viewBox="0 0 8 6"><path d="M3.500 0 0 3l3.500 3zM8 0 4.500 3 8 6z" fill="#9a9a9a" /></svg>
        <svg width="7" height="7" viewBox="0 0 7 7" className="ml-[12px] mr-[5px]"><path d="M.5.5l6 6M6.500.5l-6 6" stroke="#9a9a9a" strokeWidth="1.6" /></svg>
      </div>
      <div className="h-[28px] bg-[#262626] flex items-center shrink-0">
        <div className="w-[45px] h-full bg-[#323232] flex items-center justify-center text-[12px] leading-none text-[#dcdcdc]">属性</div>
        <Burger className="ml-auto mr-[7px]" />
      </div>
      <div className="h-[33px] flex items-center border-b border-[#2a2a2a] shrink-0 pt-[2px]">
        <div className="ml-[12px] w-[22px] h-[22px] bg-[#1f1f1f] flex items-center justify-center">
          <svg width="13" height="13" viewBox="0 0 13 13"><rect x="1.500" y="1.500" width="10" height="10" fill="none" stroke="#d8d8d8" /><path d="M0 0h3v3H0zM10 0h3v3h-3zM0 10h3v3H0zM10 10h3v3h-3z" fill="#d8d8d8" /></svg>
        </div>
        <svg width="17" height="13" viewBox="0 0 17 13" className="ml-[5px]"><rect width="17" height="13" fill="#dcdcdc" /><circle cx="8.500" cy="6.500" r="3.800" fill="#3a3a3a" /></svg>
        <span className="ml-[9px] pt-[2px] text-[12px] leading-none text-[#9c9c9c] whitespace-nowrap">实时形状属性</span>
      </div>
      <div className="flex-1 flex min-h-0">
        <div className="w-[269px] shrink-0 flex flex-col">
          <div className="mt-[11px] ml-[10px] h-[21px] flex items-center">
            <span className="w-[21px] text-[11px] leading-none text-[#909090]">W:</span>
            <Num>281 像素</Num>
            <div className="ml-[11px] w-[14px] flex"><LinkIcon /></div>
            <span className="ml-[12px] w-[18px] text-[11px] leading-none text-[#909090]">H:</span>
            <Num>281 像素</Num>
          </div>
          <div className="mt-[8px] ml-[10px] h-[21px] flex items-center">
            <span className="w-[21px] pl-[5px] text-[11px] leading-none text-[#909090]">X:</span>
            <Num tight>1068 像素</Num>
            <div className="ml-[11px] w-[14px]" />
            <span className="ml-[12px] w-[18px] pl-[2px] text-[11px] leading-none text-[#909090]">Y:</span>
            <Num tight>1319 像素</Num>
          </div>
          <div className="mt-[11px] ml-[8px] h-[19px] flex items-center">
            <div className="w-[30px] h-[19px] p-[2px] border border-[#454545] shrink-0"><div className="w-full h-full bg-[#245b68]" /></div>
            <div className="ml-[4px] w-[30px] h-[19px] p-[2px] border border-[#454545] flex items-center justify-center shrink-0"><StrokeSwatch w={24} h={14} /></div>
            <div className="ml-[4px] w-[80px] h-[19px] flex items-center border border-[#444444] rounded-[2px] shrink-0">
              <span className="flex-1 pl-[3px] text-[12px] leading-none text-[#a8a8a8] whitespace-nowrap">4.43 像素</span>
              <div className="w-[15px] h-full flex items-center justify-center border-l border-[#444444]"><Chev /></div>
            </div>
            <div className="ml-[7px] w-[33px] h-[19px] flex items-center gap-[4px] pl-[3px] bg-[#262626] rounded-[2px] border border-[#3a3a3a] shrink-0">
              <div className="w-[14px] h-[2px] bg-[#e4e4e4]" />
              <Chev />
            </div>
          </div>
          <div className="mt-[5px] ml-[8px] flex items-center">
            <Drop w="w-[63px]">
              <svg width="13" height="13" viewBox="0 0 13 13"><rect x="2" y="2" width="9" height="9" fill="none" stroke="#111" strokeWidth="1.5" /><rect x="3.500" y="3.500" width="6" height="6" fill="none" stroke="#ddd" /><path d="M0 0h3v3H0zM10 0h3v3h-3zM0 10h3v3H0zM10 10h3v3h-3z" fill="#111" /></svg>
            </Drop>
            <div className="ml-[5px]">
              <Drop w="w-[65px]">
                <svg width="10" height="11" viewBox="0 0 10 11"><path d="M2 0h8v11H2V8H0V3h2z" fill="#e0e0e0" /><path d="M1 4.500h4v2H1z" fill="#111" /></svg>
              </Drop>
            </div>
            <div className="ml-[5px]">
              <Drop w="w-[50px]">
                <svg width="12" height="12" viewBox="0 0 12 12"><path d="M0 0h12v5H6v7H0z" fill="#e0e0e0" /><path d="M4 4h4v2H7v2H5V6H4z" fill="#111" /></svg>
              </Drop>
            </div>
          </div>
          <Num w="w-[169px]" h="h-[21px]" className="mt-[14px] ml-[27px]">0像素0像素0像素0像素</Num>
          <div className="mt-[5px] ml-[11px] h-[21px] flex items-center">
            <Corner tl />
            <Num w="w-[68px]" className="ml-[7px] !pl-[3px]">0 像素</Num>
            <Num w="w-[68px]" className="ml-[4px] !pl-[3px]">0 像素</Num>
            <div className="ml-[8px]"><Corner tr /></div>
          </div>
          <div className="mt-[6px] ml-[90px] w-[25px] h-[25px] bg-[#1f1f1f] rounded-[2px] flex items-center justify-center shrink-0"><LinkIcon color="#c8c8c8" /></div>
          <div className="mt-[6px] ml-[11px] h-[21px] flex items-center">
            <Corner bl />
            <Num w="w-[68px]" className="ml-[7px] !pl-[3px]">0 像素</Num>
            <Num w="w-[68px]" className="ml-[4px] !pl-[3px]">0 像素</Num>
            <div className="ml-[8px]"><Corner br /></div>
          </div>
          <div className="mt-[10px] ml-[37px] w-[132px] h-[23px] flex border border-[#3f3f3f] rounded-[2px] bg-[#2a2a2a] shrink-0">
            <div className="w-[33px] bg-[#1f1f1f] flex items-center justify-center border-r border-[#444444]">
              <svg width="14" height="14" viewBox="0 0 14 14"><path d="M0 0h9v4h5v10H5v-4H0z" fill="#dcdcdc" /></svg>
            </div>
            <div className="w-[33px] flex items-center justify-center border-r border-[#444444]">
              <svg width="12" height="13" viewBox="0 0 12 13"><path d="M0 0h8v4H4v4H0z" fill="#dcdcdc" /><rect x="4" y="4.500" width="7.500" height="8" fill="none" stroke="#dcdcdc" /></svg>
            </div>
            <div className="w-[33px] flex items-center justify-center border-r border-[#444444]">
              <svg width="14" height="14" viewBox="0 0 14 14"><rect x=".5" y=".5" width="9" height="9" fill="none" stroke="#dcdcdc" /><rect x="4.500" y="4.500" width="9" height="9" fill="none" stroke="#dcdcdc" /><rect x="4.500" y="4.500" width="5" height="5" fill="#555" /></svg>
            </div>
            <div className="flex-1 flex items-center justify-center">
              <svg width="14" height="14" viewBox="0 0 14 14"><path d="M0 0h9v4h5v10H5v-4H0z" fill="#dcdcdc" /><rect x="5" y="5" width="4" height="4" fill="#222" /></svg>
            </div>
          </div>
        </div>
        <div className="flex-1 flex flex-col">
          <div className="h-[344px] bg-[#2b2b2b]" />
        </div>
      </div>
      <div className="h-[9px] bg-[#262626] border-t border-[#1c1c1c] shrink-0" />
    </div>
  );
}

export default function App() {
  return (
    <div className="w-[1920px] h-[1080px] relative flex flex-col bg-[#262626] overflow-hidden [font-family:'Open_Sans','Noto_Sans_CJK_SC',sans-serif]">
      <TitleBar />
      <OptionsBar />
      <div className="h-[1013px] flex shrink-0">
        <LeftTools />
        <Center />
        <Dock />
        <LayersPanel />
      </div>
      <div className="h-[3px] bg-[#0e0e0e] shrink-0" />
      <ShapeMenu />
      <PropertiesPanel />
    </div>
  );
}
